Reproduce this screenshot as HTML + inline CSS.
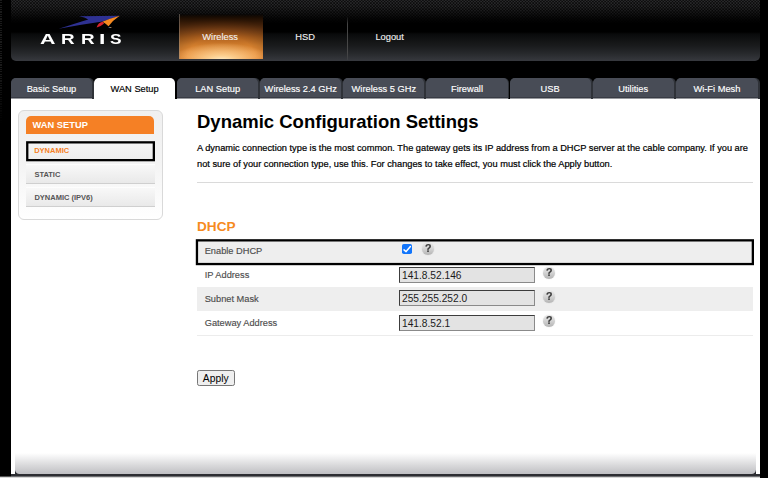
<!DOCTYPE html>
<html lang="en">
<head>
<meta charset="utf-8">
<title>ARRIS - WAN Setup - Dynamic</title>
<style>
*{box-sizing:border-box;margin:0;padding:0}
html,body{width:768px;height:478px;overflow:hidden;background:#000}
body{font-family:"Liberation Sans",Arial,Helvetica,sans-serif;color:#000;position:relative}
div,span{position:absolute}
#edge{left:0;top:0;width:1.5px;height:150px;-webkit-mask-image:linear-gradient(to bottom,#000 0,#000 70px,transparent 125px);mask-image:linear-gradient(to bottom,#000 0,#000 70px,transparent 125px);background:repeating-linear-gradient(to bottom,#1a1a1a 0,#1a1a1a 1.2px,#000 1.2px,#000 2.3px)}
#hdr{left:11px;top:0;width:749px;height:60.5px;border-radius:0 0 5px 5px;
 background:linear-gradient(to bottom,#000 0,#000 32px,#090a0b 34px,#121314 40px,#1a1b1d 46px,#26282b 53px,#36383d 60.5px);overflow:hidden}
#dots{left:0;top:0;width:749px;height:25px;
 background-color:#060606;
 background-image:radial-gradient(circle at 50% 50%,#343436 0,#2c2c2e .6px,rgba(20,20,20,0) 1.25px),radial-gradient(circle at 50% 50%,#343436 0,#2c2c2e .6px,rgba(20,20,20,0) 1.25px);
 background-size:3.07px 3.07px;background-position:0 0,1.535px 1.535px}
#dotfade{left:0;top:0;width:749px;height:25px;background:linear-gradient(to bottom,rgba(0,0,0,0) 0,rgba(0,0,0,.12) 6px,rgba(0,0,0,.5) 13px,rgba(0,0,0,.85) 19px,#000 23.5px)}
.lg{will-change:transform;top:29.5px;font-size:15.3px;font-weight:bold;color:#fff;line-height:18px;transform-origin:0 0;transform:scaleX(1.56)}
.nav{top:14px;height:46px;width:84.5px;color:#f0f0f0;-webkit-text-stroke:.12px #f0f0f0;font-size:9.3px;text-align:center;line-height:46px}
#n1{left:167.5px;width:84.3px;height:45.4px;text-indent:-2px;border-left:1px solid rgba(150,140,130,.5);background:
 radial-gradient(ellipse 60% 40% at 50% 104%,#fff0cc 0,rgba(255,216,155,.9) 28%,rgba(250,170,90,0) 100%),
 radial-gradient(ellipse 75% 95% at 50% 100%,rgba(0,0,0,0) 0,rgba(0,0,0,0) 55%,rgba(0,0,0,.32) 100%),
 linear-gradient(to bottom,rgba(30,14,2,0) 0,#241103 3px,#4a2409 8px,#7c4116 15px,#ae601e 23px,#d07c2c 31px,#e38a36 38px,#e88830 43px,#e07a22 46px)}
.sep{top:16px;width:1px;height:44px;background:linear-gradient(to bottom,rgba(70,70,70,0) 0,#444 8px,#484848 36px,#3c3e42 44px)}
.tab{top:78px;height:21px;width:83.1px;background:#2f3238;border-radius:5px 5px 0 0}
.tab b{position:absolute;left:0;top:0;width:81.2px;height:21px;background:linear-gradient(to bottom,#484c56 0,#484c56 18.7px,#3a3d46 19.2px,#363942 20px,#8e9095 20.1px,#a0a2a6 21px);border-radius:5px 5px 0 0;
 color:#fff;font-weight:normal;font-size:9.3px;line-height:23.8px;text-align:center;white-space:nowrap;-webkit-text-stroke:.15px #fff}
.tab.on{background:none}
.tab.on b{background:#fff;color:#000;height:21.5px;border:0;-webkit-text-stroke:.15px #000}
#main{left:11px;top:99px;width:749px;height:375px;background:#fff}
#side{left:18.3px;top:110.3px;width:144.5px;height:109.3px;border:1px solid #d9d9d9;border-radius:6px;background:linear-gradient(to bottom,#f0f0f0 0,#f4f4f4 50%,#fff 100%)}
#sh{left:26.1px;top:115.8px;width:128.4px;height:18.4px;background:#f58025;color:#fff;font-weight:bold;font-size:9.3px;line-height:19px;padding-left:6.5px;border-radius:5px 5px 0 0}
.si{left:26.1px;width:128.6px;height:19.6px;font-size:7.5px;font-weight:bold;color:#555;line-height:19.4px;padding-left:8.3px;
 background:linear-gradient(to bottom,#f8f8f8,#e9e9e9);border-bottom:1px solid #cfcfcf;border-top:1px solid #fdfdfd}
.si.on{color:#f58025;border:0;left:27px;width:127px;height:18.4px;line-height:17.7px;padding-left:7.2px;background:linear-gradient(to bottom,#f6f6f6,#ececec)}
h1{position:absolute;left:197px;top:111px;font-size:18.5px;font-weight:bold;white-space:nowrap;line-height:21px}
#desc{left:197px;top:139.9px;width:560px;font-size:9.25px;line-height:16.3px;color:#000;white-space:nowrap;-webkit-text-stroke:.2px #000}
#desc span{position:static}
#hr{left:197px;top:181.6px;width:556px;height:1px;background:#dadada}
h2{position:absolute;left:197px;top:218.6px;font-size:13.6px;line-height:16px;font-weight:bold;color:#f68b1f}
.row{left:197.3px;width:555.5px;font-size:9.25px;color:#4d4d4d;-webkit-text-stroke:.15px #4d4d4d;padding-left:7.4px;white-space:nowrap}
.row.g{background:#eee}
.inp{-webkit-text-stroke:0;left:201.6px;top:3.9px;width:136.4px;height:16px;border:1.4px solid #3c3c3c;border-right:1.2px solid #8a8a8a;border-bottom:1.2px solid #8a8a8a;background:#e3e3e3;font-size:10.2px;line-height:15.4px;color:#1a1a1a;padding-left:2.1px}
.q{width:11.6px;height:11.6px;border-radius:50%;background:linear-gradient(to bottom,#e8e8e8 0,#d2d2d2 50%,#b4b4b4 100%);box-shadow:0 0 1px rgba(120,120,120,.35);color:#3c3c3c;font-family:"Liberation Sans",Arial,sans-serif;font-weight:bold;font-size:10.6px;line-height:11.6px;text-align:center;text-indent:.7px;will-change:transform;margin-top:-.4px;-webkit-text-stroke:.2px #3c3c3c}
#cb{left:401.9px;top:243.9px;width:10.3px;height:10.6px;background:#1175fb;border-radius:1.8px}
#cb svg{position:absolute;left:0;top:0;width:10.3px;height:10.6px}
#btn{left:197.3px;top:370px;width:37.6px;height:15.8px;border:1.1px solid #767676;border-radius:2.3px;background:#efefef;font-size:10.3px;line-height:15.2px;text-align:center;color:#000;text-indent:-.8px}
#fbg{left:11px;top:468px;width:749px;height:8.7px;background:#2c2d32}
#fw{left:11px;top:440px;width:749px;height:34px;background:linear-gradient(to right,#fff 0,#fff 3.6px,rgba(255,255,255,0) 3.6px,rgba(255,255,255,0) 744.9px,#fff 744.9px)}
#foot{left:14.6px;top:453px;width:741.3px;height:20.8px;border-radius:0 0 4.5px 4.5px;background:linear-gradient(to bottom,#fff 0,#efeff0 25%,#d8d8da 60%,#bfbfc3 100%)}
#fedge{left:0;top:476px;width:760px;height:2px;background:linear-gradient(to bottom,rgba(214,214,214,.38) 0,rgba(214,214,214,.38) 1px,#d6d6d6 1px)}
</style>
</head>
<body>
<div id="edge"></div>
<div id="hdr">
 <div id="dots"></div><div id="dotfade"></div>
 <svg style="position:absolute;left:45px;top:14px;width:70px;height:16px" viewBox="56 14 70 16">
  <path d="M79.1 16.2 L119.7 15.8 L102.6 21.5 Q80 24.7 58.7 28.8 Q75 23.4 88.2 19.4 Q85 17.3 79.1 16.2Z" fill="#2e3192"/>
  <path d="M119.7 15.8 Q112.5 20.6 108.5 26.2 Q105.8 23.2 102.4 21.7 Q110 18.6 119.7 15.8Z" fill="#f6891f"/>
  <path d="M102.5 21.8 Q98.2 22.6 96.6 27.6 Q100.8 26.6 104.1 23.6 Q103.4 22.4 102.5 21.8Z" fill="#d9232e"/>
  <text x="108.7" y="27.8" font-family="Liberation Sans,Arial,sans-serif" font-size="1.9" font-weight="bold" fill="#ccc">TM</text>
 </svg>
 <span class="lg" style="left:28.9px;transform:scaleX(1.4)">A</span>
 <span class="lg" style="left:50.0px;transform:scaleX(1.23)">R</span>
 <span class="lg" style="left:69.7px;transform:scaleX(1.23)">R</span>
 <span class="lg" style="left:88.4px;transform:scaleX(1.5)">I</span>
 <span class="lg" style="left:99.0px;transform:scaleX(1.13)">S</span>
 <div class="nav" id="n1">Wireless</div>
 <div class="nav" style="left:251.8px">HSD</div>
 <div class="nav" style="left:336.4px">Logout</div>
 <div class="sep" style="left:335.9px"></div>
</div>
<div class="tab" style="left:10.9px"><b>Basic Setup</b></div>
<div class="tab on" style="left:94px"><b>WAN Setup</b></div>
<div class="tab" style="left:177.1px"><b>LAN Setup</b></div>
<div class="tab" style="left:260.2px"><b>Wireless 2.4 GHz</b></div>
<div class="tab" style="left:343.3px"><b>Wireless 5 GHz</b></div>
<div class="tab" style="left:426.4px"><b>Firewall</b></div>
<div class="tab" style="left:509.5px"><b>USB</b></div>
<div class="tab" style="left:592.6px"><b>Utilities</b></div>
<div class="tab" style="left:675.7px;width:84.3px"><b style="width:82.4px">Wi-Fi Mesh</b></div>
<div id="main"></div>
<div id="side"></div>
<div id="sh">WAN SETUP</div>
<div class="si on" style="top:142.2px">DYNAMIC</div>
<svg style="position:absolute;left:20px;top:136px;width:140px;height:30px" viewBox="20 136 140 30"><rect x="27.25" y="142.35" width="126.6" height="17.8" fill="none" stroke="#000" stroke-width="2.3"/></svg>
<div class="si" style="top:164.3px">STATIC</div>
<div class="si" style="top:187.2px">DYNAMIC (IPV6)</div>
<h1>Dynamic Configuration Settings</h1>
<div id="desc">A dynamic connection type is the most common. The gateway gets its IP address from a DHCP server at the cable company. If you are<br>not sure of your connection type, use this. For changes to take effect, you must click the Apply button.</div>
<div id="hr"></div>
<h2>DHCP</h2>
<div class="row g" style="top:241.3px;height:21.7px;line-height:21.6px">Enable DHCP</div>
<svg style="position:absolute;left:190px;top:235px;width:570px;height:36px" viewBox="190 235 570 36"><rect x="196.95" y="240.35" width="555.9" height="23.7" fill="none" stroke="#000" stroke-width="2.3"/></svg>
<div class="row" style="top:263px;height:24.1px;line-height:25.4px">IP Address<div class="inp">141.8.52.146</div><div class="q" style="left:346.2px;top:4.5px">?</div></div>
<div class="row g" style="top:287.1px;height:24.3px;line-height:25.4px">Subnet Mask<div class="inp" style="top:3.4px">255.255.252.0</div><div class="q" style="left:346.2px;top:4.4px">?</div></div>
<div class="row" style="top:311.4px;height:24.3px;line-height:24.6px;border-bottom:1px solid #ececec">Gateway Address<div class="inp" style="top:3.2px">141.8.52.1</div><div class="q" style="left:346.2px;top:4.1px">?</div></div>
<div id="cb"><svg viewBox="0 0 10.3 10.6"><path d="M2 5.9 L4.1 7.6 L8.4 2.6" fill="none" stroke="#fff" stroke-width="1.5" stroke-linecap="round" stroke-linejoin="round"/></svg></div>
<div class="q" style="left:422.3px;top:243.1px">?</div>
<div id="btn">Apply</div>
<div id="fbg"></div>
<div id="fw"></div>
<div id="foot"></div>
<div id="fedge"></div>
</body>
</html>
